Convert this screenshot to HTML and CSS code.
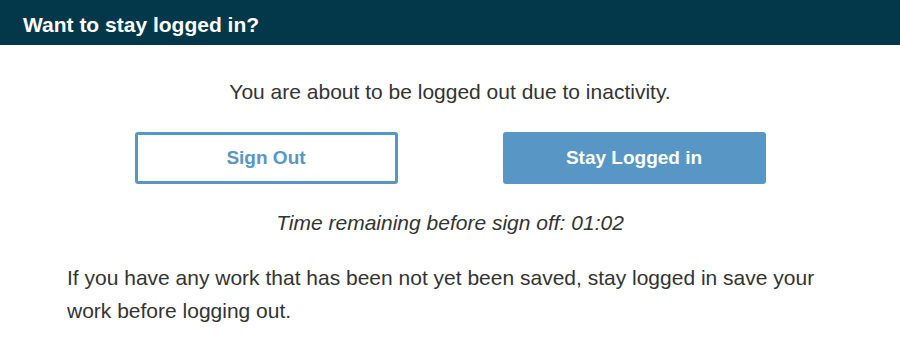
FILE: index.html
```html
<!DOCTYPE html>
<html lang="en">
<head>
  <meta charset="UTF-8" />
  <title>Want to stay logged in?</title>
  <link rel="stylesheet" href="styles.css">
</head>
<body>
  <div class="modal">
    <div class="modal-header">Want to stay logged in?</div>
    <div class="modal-body">
      <p class="notice">You are about to be logged out due to inactivity.</p>
      <div class="actions">
        <button class="btn btn-outline">Sign Out</button>
        <button class="btn btn-primary">Stay Logged in</button>
      </div>
      <p class="timer">Time remaining before sign off: <span id="countdown">01:02</span></p>
      <p class="info">If you have any work that has been not yet been saved, stay logged in save your work before logging out.</p>
    </div>
  </div>
</body>
</html>
```

FILE: styles.css
```css
body {
  margin: 0;
  background: #fff;
  font-family: "Liberation Sans", Arial, sans-serif;
  color: #333;
}
.modal-header {
  background: #023849;
  color: #fff;
  font-weight: bold;
  font-size: 21px;
  height: 43px;
  line-height: 45px;
  padding: 2px 23px 0;
}
.modal-body {
  padding: 0 67px;
}
.notice {
  text-align: center;
  font-size: 21px;
  line-height: 24px;
  margin: 35px 0 0;
}
.actions {
  display: flex;
  justify-content: center;
  gap: 105px;
  margin-top: 28px;
}
.btn {
  width: 263px;
  height: 52px;
  font-family: "Liberation Sans", Arial, sans-serif;
  font-size: 19px;
  font-weight: bold;
  border-radius: 3px;
  cursor: pointer;
}
.btn-outline {
  background: #fff;
  color: #5796c5;
  border: 3px solid #5796c5;
}
.btn-primary {
  background: #5796c5;
  color: #fff;
  border: none;
}
.timer {
  text-align: center;
  font-style: italic;
  font-size: 21px;
  line-height: 24px;
  margin: 27px 0 0;
}
.info {
  font-size: 21px;
  line-height: 33px;
  margin: 26px 0 0;
}
```
